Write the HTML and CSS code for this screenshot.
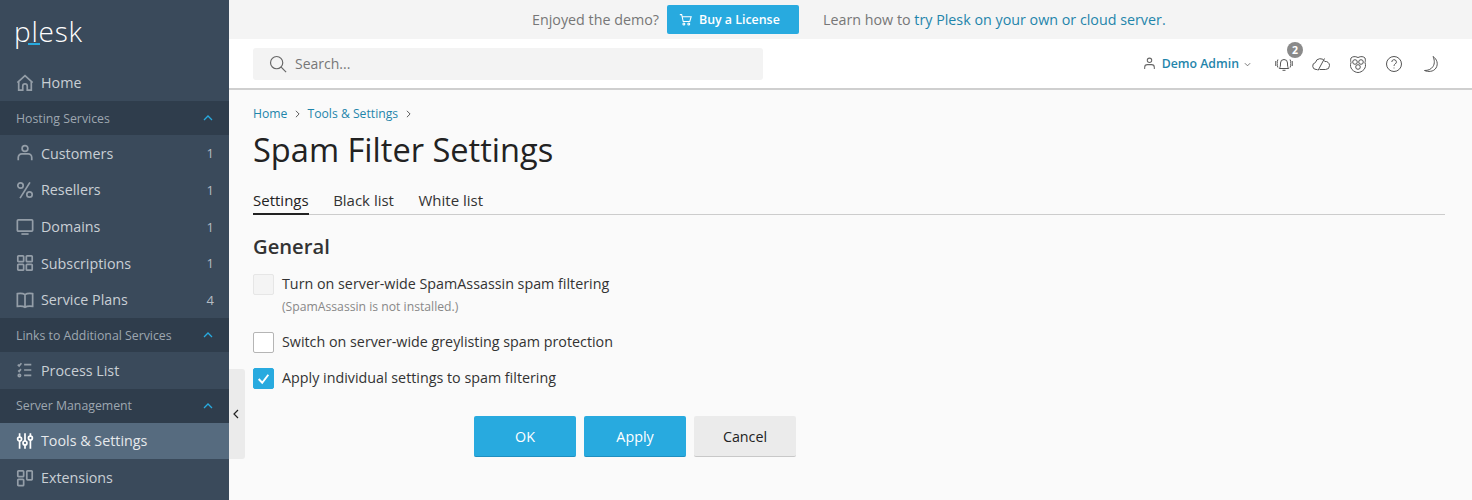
FILE: index.html
```html
<!DOCTYPE html>
<html lang="en">
<head>
<meta charset="utf-8">
<title>Spam Filter Settings</title>
<link rel="stylesheet" href="styles.css">
</head>
<body>
<div class="app">
  <aside class="sidebar">
    <div class="logo"><span class="logo-text">plesk</span><span class="logo-bar"></span></div>
    <nav class="nav">
      <a class="item"><svg class="ico" viewBox="0 0 20 20"><path d="M1.500 9.500 10 1.800l8.500 7.700M3 8.500V18h4.500v-4.500a2.500 2.500 0 0 1 5 0V18H17V8.500"/></svg><span class="label">Home</span></a>
      <div class="section"><span>Hosting Services</span><svg class="chev" viewBox="0 0 10 6"><path d="M1 5l4-4 4 4"/></svg></div>
      <a class="item"><svg class="ico" viewBox="0 0 20 20"><circle cx="10" cy="5" r="3.200"/><path d="M2.500 18v-3a4 4 0 0 1 4-4h7a4 4 0 0 1 4 4v3"/></svg><span class="label">Customers</span><span class="count">1</span></a>
      <a class="item"><svg class="ico" viewBox="0 0 20 20"><circle cx="5" cy="5" r="3"/><circle cx="15" cy="15" r="3"/><path d="M15.500 1.500 4.500 19"/></svg><span class="label">Resellers</span><span class="count">1</span></a>
      <a class="item"><svg class="ico" viewBox="0 0 20 20"><rect x="1.500" y="2" width="17" height="12.500" rx="1"/><path d="M6 17.800h8"/></svg><span class="label">Domains</span><span class="count">1</span></a>
      <a class="item"><svg class="ico" viewBox="0 0 20 20"><rect x="2" y="2" width="6.500" height="6.500" rx=".8"/><rect x="11.500" y="2" width="6.500" height="6.500" rx=".8"/><rect x="2" y="11.500" width="6.500" height="6.500" rx=".8"/><rect x="11.500" y="11.500" width="6.500" height="6.500" rx=".8"/></svg><span class="label">Subscriptions</span><span class="count">1</span></a>
      <a class="item"><svg class="ico" viewBox="0 0 20 20"><path d="M10 4C8.500 3 5 2.500 1.500 3v14c3.500-.5 7 0 8.500 1 1.500-1 5-1.500 8.500-1V3C15 2.500 11.500 3 10 4zM10 4v14"/></svg><span class="label">Service Plans</span><span class="count">4</span></a>
      <div class="section"><span>Links to Additional Services</span><svg class="chev" viewBox="0 0 10 6"><path d="M1 5l4-4 4 4"/></svg></div>
      <a class="item"><svg class="ico" viewBox="0 0 20 20"><path d="M2 4l1.500 1.500L6 2.500M2.500 10.500l1 1 2-2.500M9 4h8M9 10h8M9 16h8"/><circle cx="3.800" cy="16" r="1.300"/></svg><span class="label">Process List</span></a>
      <div class="section"><span>Server Management</span><svg class="chev" viewBox="0 0 10 6"><path d="M1 5l4-4 4 4"/></svg></div>
      <a class="item active"><svg class="ico" viewBox="0 0 20 20"><path d="M4 1.500v4M4 10v8.500M10 1.500V10M10 14.500v4M16 1.500v3M16 9v9.500"/><circle cx="4" cy="7.800" r="2.200"/><circle cx="10" cy="12.200" r="2.200"/><circle cx="16" cy="6.800" r="2.200"/></svg><span class="label">Tools &amp; Settings</span></a>
      <a class="item"><svg class="ico" viewBox="0 0 20 20"><rect x="2" y="2" width="6.500" height="6.500" rx=".8"/><rect x="2" y="11.500" width="6.500" height="7" rx=".8"/><rect x="12" y="2" width="6" height="10" rx=".8"/></svg><span class="label">Extensions</span></a>
    </nav>
  </aside>
  <div class="main">
    <div class="promo">
      <span class="promo-q">Enjoyed the demo?</span>
      <a class="buy"><svg class="cart" viewBox="0 0 16 16"><path d="M1 2h2.300l1.900 8.500h8L15 4.500H4"/><circle cx="6" cy="13.500" r="1.200"/><circle cx="12" cy="13.500" r="1.200"/></svg>Buy a License</a>
      <span class="promo-learn">Learn how to <a class="promo-link">try Plesk on your own or cloud server.</a></span>
    </div>
    <header class="header">
      <div class="search"><svg class="search-ico" viewBox="0 0 20 20"><circle cx="8.500" cy="8.500" r="6.800"/><path d="M13.500 13.500l5.500 5.500"/></svg><span>Search...</span></div>
      <div class="tools">
        <svg class="user-ico" viewBox="0 0 14 14"><circle cx="7" cy="3.600" r="2.400"/><path d="M1.800 13v-1.800A3 3 0 0 1 4.800 8.200h4.400a3 3 0 0 1 3 3V13"/></svg>
        <span class="user">Demo Admin</span>
        <svg class="caret" viewBox="0 0 8 5"><path d="M1 1l3 3 3-3"/></svg>
        <span class="tool bell">
          <svg class="tool-ico" viewBox="0 0 18 18"><path d="M4.300 13.500c.9-1 1.200-2.500 1.200-5.500a3.500 3.500 0 0 1 7 0c0 3 .3 4.500 1.200 5.500zM7.500 15.300h3M2.900 4.500c-1 2.500-1 5.500 0 8M.9 6c-.5 1.700-.5 3.500 0 5M15.100 4.500c1 2.500 1 5.500 0 8M17.100 6c.5 1.700.5 3.500 0 5"/></svg>
          <span class="badge">2</span>
        </span>
        <span class="tool"><svg class="tool-ico" viewBox="0 0 18 18"><path d="M5.500 14.500H4a3.500 3.500 0 0 1-.6-6.900A5 5 0 0 1 12.800 6.500a4 4 0 0 1 4.700 4 4 4 0 0 1-4 4H7.500M12.500 3.500 6 15.500"/></svg></span>
        <span class="tool"><svg class="tool-ico" viewBox="0 0 18 18"><path d="M2 3c1.500-1.500 4-2 7-.5 3-1.500 5.500-1 7 .5.500 1.500.5 3 0 4.500 1 3 .5 5-1 7-2 2-4 3-6 3s-4-1-6-3c-1.500-2-2-4-1-7-.5-1.500-.5-3 0-4.500z"/><circle cx="6" cy="7" r="2.300"/><circle cx="12" cy="7" r="2.300"/><circle cx="9" cy="12" r="2.300"/></svg></span>
        <span class="tool"><svg class="tool-ico" viewBox="0 0 18 18"><circle cx="9" cy="9" r="7.500"/><path d="M6.800 7a2.300 2.300 0 1 1 3.400 2c-.8.500-1.200 1-1.200 1.900M9 12.600v.8"/></svg></span>
        <span class="tool"><svg class="tool-ico" viewBox="0 0 18 18"><path d="M11 1.500c4 2.500 5.500 7.500 3 11.500s-8 4-11.500 2.500c3.500 0 6.500-1 8.500-4s1.500-7-.0-10z"/></svg></span>
      </div>
    </header>
    <main class="content">
      <button class="collapse" aria-label="Collapse"><svg viewBox="0 0 6 10"><path d="M5 1 1 5l4 4"/></svg></button>
      <nav class="crumbs"><a>Home</a><svg class="sep" viewBox="0 0 6 10"><path d="M1 1l4 4-4 4"/></svg><a>Tools &amp; Settings</a><svg class="sep" viewBox="0 0 6 10"><path d="M1 1l4 4-4 4"/></svg></nav>
      <h1 class="title">Spam Filter Settings</h1>
      <div class="tabs"><a class="tab on">Settings</a><a class="tab">Black list</a><a class="tab">White list</a></div>
      <h2 class="subtitle">General</h2>
      <div class="field first">
        <span class="box disabled"></span>
        <div><div class="check-label">Turn on server-wide SpamAssassin spam filtering</div><div class="hint">(SpamAssassin is not installed.)</div></div>
      </div>
      <div class="field second"><span class="box"></span><div class="check-label">Switch on server-wide greylisting spam protection</div></div>
      <div class="field third"><span class="box checked"><svg viewBox="0 0 14 14"><path d="M2.500 7.500 5.800 11 11.500 3.500"/></svg></span><div class="check-label">Apply individual settings to spam filtering</div></div>
      <div class="buttons"><a class="btn primary">OK</a><a class="btn primary">Apply</a><a class="btn">Cancel</a></div>
    </main>
  </div>
</div>
</body>
</html>
```
FILE: styles.css
```css
* { box-sizing: border-box; }
html, body { margin: 0; height: 500px; overflow: hidden; }
body { font-family: "Open Sans", sans-serif; font-size: 14px; color: #222; }
svg { display: block; fill: none; stroke: currentColor; }
.app { display: flex; height: 500px; }

.sidebar { width: 229px; flex: none; background: #3a4a5b; color: #c9cfd5; }
.logo { position: relative; height: 64.500px; padding: 9px 0 0 14px; }
.logo-text { font-size: 28px; font-weight: 300; letter-spacing: .8px; color: #fff; line-height: 44px; }
.logo-bar { position: absolute; left: 28px; top: 43px; width: 12px; height: 2px; background: #28aadf; }
.item { display: flex; align-items: center; height: 36.600px; padding: 0 16px; font-size: 14.300px; }
.item.active { background: #566b7f; color: #e6e9ec; }
.item.active .ico { color: #fff; }
.ico { width: 18px; height: 18px; margin-right: 7px; stroke-width: 1.900; color: #949ea8; flex: none; }
.label { flex: 1; }
.count { font-size: 13px; color: #b4bcc4; margin-right: -1px; width: 8px; text-align: right; }
.section { display: flex; align-items: center; justify-content: space-between; height: 34px; padding: 0 16px; background: #2f3d4c; color: #9ea7b0; font-size: 12.300px; }
.chev { width: 10px; height: 6px; stroke: #28aadf; stroke-width: 1.300; }

.main { flex: 1; min-width: 0; display: flex; flex-direction: column; background: #fafafa; }
.promo { display: flex; align-items: center; height: 39px; padding-left: 303px; background: #f4f4f4; font-size: 14.300px; color: #777; }
.buy { display: flex; align-items: center; width: 132px; height: 29px; margin: 0 24px 0 8px; padding-left: 12px; border-radius: 2px; background: #28aadf; color: #fff; font-size: 12.400px; font-weight: 600; }
.cart { width: 13px; height: 13px; margin-right: 7px; stroke-width: 1.300; }
.promo-link { color: #1f85ab; }
.header { display: flex; align-items: center; justify-content: space-between; height: 51px; padding: 0 32px 0 24px; background: #fff; border-bottom: 2px solid #cfcfcf; }
.search { display: flex; align-items: center; width: 510px; height: 32px; padding-left: 16px; border-radius: 3px; background: #f3f3f3; color: #777; font-size: 14px; }
.search-ico { width: 18px; height: 18px; margin-right: 8px; stroke-width: 1.300; color: #666; }
.tools { display: flex; align-items: center; }
.user-ico { width: 13px; height: 13px; margin-right: 6px; stroke-width: 1.100; color: #666; }
.user { color: #1f85ab; font-size: 12.300px; font-weight: 600; }
.caret { width: 7px; height: 5px; margin: 1px 24px 0 5px; stroke-width: 1; color: #666; }
.tool { position: relative; display: block; width: 18px; height: 18px; margin-left: 18.750px; color: #555; }
.bell { margin-left: 0; }
.tool-ico { width: 18px; height: 18px; stroke-width: 1; }
.badge { position: absolute; left: 12px; top: -13px; width: 16px; height: 16px; border-radius: 50%; background: #8a8a8a; color: #fff; font-size: 10.500px; font-weight: 700; line-height: 16px; text-align: center; }

.content { position: relative; flex: 1; padding: 15px 27px 0 24px; }
.collapse { position: absolute; left: 0; top: 279px; display: flex; align-items: center; justify-content: center; width: 16px; height: 90px; padding: 0 2px 0 0; border: 0; border-radius: 0 3px 3px 0; background: #ebebeb; color: #222; }
.collapse svg { width: 6px; height: 10px; stroke-width: 1.200; }
.crumbs { display: flex; align-items: center; height: 17px; font-size: 12.200px; color: #1f85ab; }
.sep { width: 5px; height: 8px; margin: 0 7.500px; color: #555; stroke-width: 1.200; }
.title { margin: 5px 0 0; font-size: 32.600px; font-weight: 400; line-height: 46px; color: #222; }
.tabs { display: flex; gap: 24.500px; height: 31px; margin-top: 11px; border-bottom: 1px solid #ccc; font-size: 15px; font-weight: 500; color: #333; line-height: 33px; }
.tab.on { height: 31px; border-bottom: 2px solid #222; color: #222; }
.subtitle { margin: 15px 0 0; font-size: 20.200px; font-weight: 600; line-height: 32px; color: #333; }
.field { display: flex; gap: 8px; font-size: 14.300px; color: #333; line-height: 20px; }
.first { margin-top: 12px; }
.second { margin-top: 17px; }
.third { margin-top: 15px; }
.box { display: block; width: 21px; height: 21px; flex: none; border: 1px solid #b5b5b5; border-radius: 2px; background: #fff; }
.box.disabled { background: #f4f4f4; border-color: #e6e6e6; }
.box.checked { background: #28aadf; border-color: #28aadf; color: #fff; padding: 2px; }
.box.checked svg { width: 15px; height: 15px; stroke-width: 1.800; }
.hint { margin-top: 4px; font-size: 12.200px; color: #888; line-height: 17px; }
.buttons { display: flex; gap: 8px; margin: 27px 0 0 221px; }
.btn { display: flex; align-items: center; justify-content: center; width: 102px; height: 41px; border-radius: 2px; background: #ebebeb; border-bottom: 1px solid #c8c8c8; font-size: 14.300px; color: #222; }
.btn.primary { background: #28aadf; color: #fff; border-bottom-color: #1f8fc0; }
```
